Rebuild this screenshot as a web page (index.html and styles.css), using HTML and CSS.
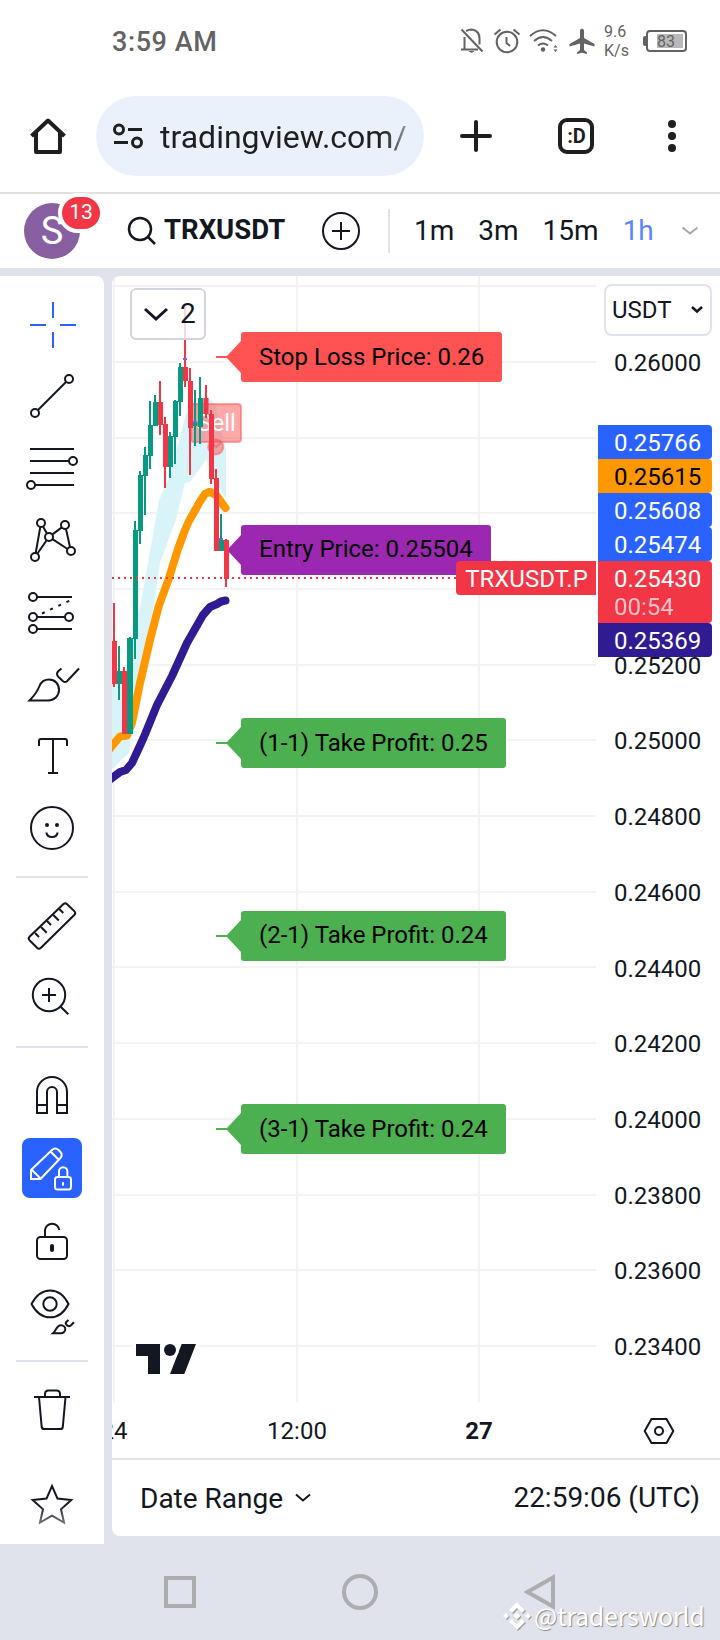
FILE: index.html
```html
<!DOCTYPE html>
<html lang="en">
<head>
  <meta charset="UTF-8" />
  <meta name="viewport" content="width=device-width, initial-scale=1.0" />
  <title>TRXUSDT chart</title>
  <link rel="stylesheet" href="styles.css">
</head>
<body>
  <div class="status-bar">
    <span class="time">3:59 AM</span>
    <svg class="status-icons" width="144" height="32" viewBox="456 24 144 32">
      <!-- muted bell -->
      <path d="M466 30q3-1.500 5.500-1.500 8 1 8 9v6M464.500 36v12.500M461 48.500h17M461.500 28.500l21 22" />
      <path class="solid" d="M468.500 50h6q-3 3.500-6 0z" />
      <!-- alarm -->
      <circle cx="507" cy="41" r="10.300" />
      <path d="M506.500 36v6l3.500 3M494.500 33.500l6-5M519.500 33.500l-6-5" />
      <!-- wifi -->
      <path d="M530 35q13-11.500 26 0M534 40q9-8 18 0M538 44.500q5-4 10 0" />
      <circle class="solid" cx="543" cy="48.500" r="2.200" />
      <path class="solid" d="M553.500 46.500l2-2.500 2 2.500zM553.500 48.500h4l-2 2.500z" />
      <!-- airplane -->
      <path class="solid" d="M580 29q2-3 4 0v8l10.500 6v2.500L584 42.500V49l3 2.500V53l-5-1.200-5 1.200v-1.500l3-2.500v-6.500L569.500 45.500V43L580 37z" />
    </svg>
    <span class="speed">9.6<br>K/s</span>
    <span class="battery"><span>83</span></span>
  </div>

  <div class="browser-bar">
    <svg class="home" width="40" height="40" viewBox="28 116 40 40">
      <path d="M31.500 136L48 120.500 64.500 136M36 133v19h24v-19" />
    </svg>
    <div class="url">
      <svg width="32" height="28" viewBox="112 122 32 28">
        <circle cx="119" cy="129.500" r="4.500" />
        <circle cx="137" cy="142.500" r="4.500" />
        <path d="M128 129.500h14M114 142.500h14" />
      </svg>
      <span>tradingview.com/c</span>
    </div>
    <svg class="browser-actions" width="232" height="40" viewBox="456 116 232 40">
      <path d="M462 136h28M476 122v28" />
      <rect x="560" y="120" width="32" height="32" rx="7" />
      <text x="576.500" y="142.500">:D</text>
      <circle cx="672" cy="124" r="4" />
      <circle cx="672" cy="136" r="4" />
      <circle cx="672" cy="148" r="4" />
    </svg>
  </div>

  <div class="tv-header">
    <div class="avatar">S<span class="badge">13</span></div>
    <svg class="search" width="32" height="32" viewBox="126 214 32 32">
      <circle cx="140" cy="228" r="11" />
      <path d="M147.500 235.500l7.500 7.500" />
    </svg>
    <span class="symbol">TRXUSDT</span>
    <svg class="compare" width="40" height="40" viewBox="321 211 40 40">
      <circle cx="341" cy="231" r="18" />
      <path d="M332 231h18M341 222v18" />
    </svg>
    <div class="intervals">
      <span>1m</span>
      <span>3m</span>
      <span>15m</span>
      <span class="active">1h</span>
    </div>
    <svg class="more" width="20" height="12" viewBox="0 0 20 12"><path d="M2.500 2.500L10 8.500l7.500-6" /></svg>
  </div>

  <div class="main">
    <div class="tools">
      <div class="tool cross">
        <svg viewBox="0 0 60 60"><path d="M31 8v16M31 38v16M8 31h16M38 31h16" /></svg>
      </div>
      <div class="tool">
        <svg viewBox="0 0 60 60"><path d="M16 44l28-28" /><circle cx="13" cy="47" r="4" /><circle cx="47" cy="13" r="4" /></svg>
      </div>
      <div class="tool">
        <svg viewBox="0 0 60 60"><path d="M8 11h44M8 23h39M8 35h44M13 47h39" /><circle cx="51" cy="23" r="4" /><circle cx="9" cy="47" r="4" /></svg>
      </div>
      <div class="tool">
        <svg viewBox="0 0 60 60">
          <path d="M13.700 43l4.600-26M21 16.500l4 7M30.200 24.600l9.600-7.200M44 19l4 18M45.500 39L30.500 29.200M24.700 30.300L15.300 43.700" />
          <circle cx="19" cy="13" r="4" /><circle cx="43" cy="15" r="4" /><circle cx="27" cy="27" r="4" />
          <circle cx="49" cy="41" r="4" /><circle cx="13" cy="47" r="4" />
        </svg>
      </div>
      <div class="tool">
        <svg viewBox="0 0 60 60">
          <path d="M15 15h35M15 35h28M15 47h35" />
          <path d="M20 31.500L48 18.500" stroke-dasharray="3 6" />
          <circle cx="11" cy="15" r="4" /><circle cx="11" cy="35" r="4" /><circle cx="47" cy="35" r="4" /><circle cx="11" cy="47" r="4" />
        </svg>
      </div>
      <div class="tool">
        <svg viewBox="0 0 60 60">
          <path d="M7.500 46.500C13 41 15.500 37 17.500 32c2-5 5-6.500 9.500-6.500 6 0 10 4.500 10 10.500S32 46.500 26 46.500z" />
          <path d="M39.500 14.500L36.500 17q-3 3 0 6l4.500 4.300q2 1.500 4 0L57 14.500" />
        </svg>
      </div>
      <div class="tool">
        <svg viewBox="0 0 60 60"><path d="M17 20v-5q0-2 2-2h24q2 0 2 2v5M31 13v34M26 47h10" /></svg>
      </div>
      <div class="tool">
        <svg viewBox="0 0 60 60">
          <circle cx="30" cy="30" r="21" />
          <circle class="dot" cx="25" cy="27" r="2" /><circle class="dot" cx="35" cy="27" r="2" />
          <path d="M24.300 34.500c1 6 10.400 6 11.400 0" />
        </svg>
      </div>
      <hr>
      <div class="tool">
        <svg viewBox="0 0 60 60">
          <path d="M41.500 8q1.700-1.600 3.400 0l7.600 7.400q1.600 1.700 0 3.400L18.700 52q-1.700 1.600-3.400 0L7.500 44.200q-1.600-1.700 0-3.400z" />
          <path d="M13 37l4 4M19 31l5.700 5.700M25 25l4 4M31.300 19l5.500 5.500M37.300 13l4 4" />
        </svg>
      </div>
      <div class="tool">
        <svg viewBox="0 0 60 60"><circle cx="27" cy="27" r="16.200" /><path d="M20 27h14M27 20v14M38.700 38.700l7.600 7.600" /></svg>
      </div>
      <hr>
      <div class="tool">
        <svg viewBox="0 0 60 60"><path d="M15 47V26a15 15 0 0 1 30 0v21H35V26a5 5 0 0 0-10 0v21zM15 39h10M35 39h10" /></svg>
      </div>
      <div class="tool selected">
        <svg viewBox="0 0 60 60">
          <path d="M9 41v-9L30 12q3-3 6.500 0l1.500 1.500q3.500 3.500 0 7L18.500 41zM9.500 31.500l9 9M28.500 13.500l8.500 8.500" />
          <path d="M37 39v-5.500a4.200 4.200 0 0 1 8.400 0V39M41 44.300v3.400" />
          <rect x="33" y="39" width="16" height="12.500" rx="2.500" />
        </svg>
      </div>
      <div class="tool">
        <svg viewBox="0 0 60 60">
          <rect x="15" y="27" width="30" height="22" rx="3.500" />
          <path d="M23 27v-7a7.200 7.200 0 0 1 14.300 0" />
          <rect class="dot" x="28" y="34" width="4" height="8" rx="2" />
        </svg>
      </div>
      <div class="tool">
        <svg viewBox="0 0 60 60">
          <path d="M9.500 22C19 4 37.500 4 46.500 22 37.500 39.800 19 39.800 9.500 22z" />
          <circle cx="28" cy="22" r="6.700" />
          <path d="M31 51.300c3-2.500 3.500-8 8-8 2.500 0 4.300 2 4.300 4s-2 4-4.300 4zM46.500 38l-2 1.700q-1.500 1.500 0 3l1 1q1.500 1 3 0l3.500-3.500" />
        </svg>
      </div>
      <hr>
      <div class="tool">
        <svg viewBox="0 0 60 60"><path d="M12 17h36M23 17v-3q0-3.500 3.500-3.500h8q3.500 0 3.500 3.500v3M17 17l2.700 30q.3 2 2.300 2h16.500q2 0 2.300-2l2.700-30" /></svg>
      </div>
      <div class="tool star">
        <svg viewBox="0 0 60 60">
          <defs>
            <linearGradient id="fade" x1="0" y1="0" x2="0" y2="1">
              <stop offset="0.500" stop-color="#131722" />
              <stop offset="1" stop-color="#6d7078" />
            </linearGradient>
          </defs>
          <path stroke="url(#fade)" d="M30 12l5.500 12.600 13.800 1.400L39 35.300 42 48.500l-12-6.800-12 6.800 3-13.200L10.700 26l13.800-1.400z" />
        </svg>
      </div>
    </div>

    <div class="chart">
      <div class="pane">
        <svg class="plot" width="484" height="1182" viewBox="112 276 484 1182">
          <path class="grid" d="M114 276v1126M297 276v1126M479 276v1126M112 286h484M112 362h484M112 438h484M112 513h484M112 589h484M112 665h484M112 740h484M112 816h484M112 892h484M112 967h484M112 1043h484M112 1119h484M112 1195h484M112 1270h484M112 1346h484" />

          <path class="cloud" d="M112 683L125 672 133 640 139 613 152 540 159 500 169 478 175 457 185 417 192 403 200 398H209L215 404 223 437 226 450V500L217 483 206 460 190 482 185 483 175 523 172 530 160 563 155 597 142 673 133 717 129 753 112 769z" />

          <rect class="sell" x="191" y="404" width="50" height="38" rx="3" />
          <circle class="sell" cx="215.700" cy="447" r="7.500" />
          <path class="sell-mark" d="M211 443l5 4 5-4" />
          <text class="sell-text" x="216.500" y="430.500">Sell</text>

          <path class="ma orange" d="M108 751L112 746 120 736.500 127 735.500 132 723 140 683 150 640 158.500 607 169 578 178 549 185 530 189 521 200 501.500 205 494 210 491.700 217 496 225.500 508" />
          <path class="ma indigo" d="M108 781L112 778 120 772 126 770 132 763 143.500 738 157 705 172 676 187 643 203 615 210 607 217 604 221 601.500 225.500 600.500" />

          <g class="callout entry">
            <path class="fill" d="M227 550l14-15v-7q0-3 3-3h244q3 0 3 3v44q0 3-3 3H244q-3 0-3-3v-7z" />
            <text x="259" y="557">Entry Price: 0.25504</text>
          </g>

          <!-- wicks, then bodies -->
          <path class="wick up" d="M119 646V700M130 637V640M135 521V659M140 471V544M145 447V515M150 401V469M155 395V425M170 432V478M175 400V464M180 363V416M195 390V446M200 377V444M221 514V545" />
          <path class="wick down" d="M114 603V687M124 667V675M160 381V435M165 417V488M185 304V387M190 368V475M206 385V418M211 410V484M216 469V480M226 539V587" />
          <path class="body up" d="M119.500 671V684M135.500 530V639M140.500 475V531M145.500 455V476M150.500 425V456M155.500 402V426M170.500 436V467M175.500 401V437M180.500 367V402M195 422V426M200.500 398V427M221.500 540V551" />
          <path class="body up wide" d="M130 638V734" />
          <path class="body down" d="M114.500 641V684M124.500 671V734M160.500 402V425M165.500 424V467M185.500 367V381M190.500 381V428M206 398V414M211.500 414V479M216.500 478V551M226.500 540V579" />
          <path class="dots" d="M183 359h4M193 422h4M219 539h4" />

          <path class="last-price" d="M112 578h344" />

          <g class="callout stop">
            <path d="M216 357h12" /><path class="fill" d="M226 357l15-16v-6q0-3 3-3h255q3 0 3 3v44q0 3-3 3H244q-3 0-3-3v-6z" />
            <text x="259" y="365">Stop Loss Price: 0.26</text>
          </g>
          <g class="callout profit">
            <path d="M216 743h12" /><path class="fill" d="M226 743l15-16v-6q0-3 3-3h259q3 0 3 3v44q0 3-3 3H244q-3 0-3-3v-6z" />
            <text x="259" y="751">(1-1) Take Profit: 0.25</text>
          </g>
          <g class="callout profit">
            <path d="M216 936h12" /><path class="fill" d="M226 936l15-16v-6q0-3 3-3h259q3 0 3 3v44q0 3-3 3H244q-3 0-3-3v-6z" />
            <text x="259" y="943">(2-1) Take Profit: 0.24</text>
          </g>
          <g class="callout profit">
            <path d="M216 1129h12" /><path class="fill" d="M226 1129l15-16v-6q0-3 3-3h259q3 0 3 3v44q0 3-3 3H244q-3 0-3-3v-6z" />
            <text x="259" y="1137">(3-1) Take Profit: 0.24</text>
          </g>

          <path class="tag" d="M596 561v34H460q-4 0-4-4v-26q0-4 4-4z" />
          <text class="tag-text" x="526.500" y="586.500">TRXUSDT.P</text>

          <g class="logo">
            <path d="M136 1344h24v30h-12v-18h-12zM181.700 1344H196l-11.700 30H170z" />
            <circle cx="170" cy="1350" r="6" />
          </g>

          <text class="tick" x="114" y="1439">24</text>
          <text class="tick" x="297" y="1439">12:00</text>
          <text class="tick strong" x="479" y="1439">27</text>
        </svg>

        <div class="legend">
          <svg width="26" height="16" viewBox="0 0 26 16"><path d="M2 3l11 10L24 3" /></svg>
          <span>2</span>
        </div>

        <div class="price-axis">
          <div class="currency">
            USDT
            <svg width="14" height="10" viewBox="0 0 14 10"><path d="M2 2l5 4.500L12 2" /></svg>
          </div>
          <div class="prices">
            <span>0.26000</span>
            <span></span>
            <span></span>
            <span></span>
            <span>0.25200</span>
            <span>0.25000</span>
            <span>0.24800</span>
            <span>0.24600</span>
            <span>0.24400</span>
            <span>0.24200</span>
            <span>0.24000</span>
            <span>0.23800</span>
            <span>0.23600</span>
            <span>0.23400</span>
          </div>
          <svg class="settings" width="32" height="30" viewBox="643 1416 32 30">
            <path d="M651.500 1419h15l6.800 12-6.800 12h-15l-6.800-12z" />
            <circle cx="659" cy="1431" r="4" />
          </svg>
          <div class="price-tags">
            <span class="blue">0.25766</span>
            <span class="amber">0.25615</span>
            <span class="blue">0.25608</span>
            <span class="blue">0.25474</span>
            <span class="red">0.25430<small>00:54</small></span>
            <span class="indigo">0.25369</span>
          </div>
        </div>
      </div>

      <div class="footer">
        <span class="range">Date Range</span>
        <svg width="18" height="12" viewBox="0 0 18 12"><path d="M2 2.500l7 6 7-6" /></svg>
        <span class="clock">22:59:06 (UTC)</span>
      </div>
    </div>
  </div>

  <div class="nav-bar">
    <svg width="400" height="40" viewBox="160 1572 400 40">
      <rect x="166" y="1578" width="28" height="28" />
      <circle cx="360" cy="1592" r="16" />
      <path d="M553 1577.500v29L527.500 1592z" />
    </svg>
    <div class="watermark">
      <svg width="30" height="30" viewBox="0 0 30 30">
        <path d="M15 1l8 8-3 3-5-5-5 5-3-3zM15 29l8-8-3-3-5 5-5-5-3 3zM15 11.500l3.500 3.500-3.500 3.500-3.500-3.500zM4 12l3 3-3 3-3-3zM26 12l3 3-3 3-3-3z" />
      </svg>
      <span>@tradersworld</span>
    </div>
  </div>
</body>
</html>
```
FILE: styles.css
```css
:root {
  --text: #131722;
  --line: #e0e3eb;
  --blue: #2962ff;
  --red: #f23645;
  --green: #089981;
  --grey: #636363;
}

* {
  box-sizing: border-box;
}

body {
  margin: 0;
  width: 720px;
  height: 1640px;
  overflow: hidden;
  background: var(--line);
  color: var(--text);
  font-family: Roboto, "Liberation Sans", sans-serif;
}

svg {
  display: block;
  flex: none;
  fill: none;
  stroke: var(--text);
  stroke-width: 2;
}

svg text {
  stroke: none;
}

/* phone status bar */
.status-bar {
  display: flex;
  align-items: center;
  height: 84px;
  padding: 0 33px 2px 112px;
  background: #fff;
  color: var(--grey);
}

.time {
  width: 344px;
  padding-top: 2px;
  font-size: 27px;
  font-weight: 500;
  letter-spacing: 0.6px;
}

.status-icons {
  stroke: var(--grey);
}

.status-icons .solid {
  fill: var(--grey);
  stroke: none;
}

.speed {
  margin-left: 4px;
  width: 39px;
  font-size: 16px;
  line-height: 19px;
}

.battery {
  position: relative;
  display: flex;
  width: 41px;
  height: 22px;
  margin-left: 3px;
  padding: 2px;
  border: 2px solid var(--grey);
  border-radius: 4px;
}

.battery::before {
  content: "";
  position: absolute;
  left: -5px;
  top: 4px;
  width: 3px;
  height: 10px;
  background: var(--grey);
  border-radius: 2px 0 0 2px;
}

.battery span {
  width: 28px;
  margin-left: 7px;
  background: #b9b9b9;
  font-size: 16px;
  line-height: 15px;
}

/* browser bar */
.browser-bar {
  display: flex;
  align-items: center;
  height: 110px;
  padding: 0 28px 4px;
  background: #fff;
  border-bottom: 2px solid #e0e0e0;
}

.home {
  stroke: #1f1f1f;
  stroke-width: 4;
  stroke-linejoin: round;
}

.url {
  display: flex;
  align-items: center;
  width: 328px;
  height: 80px;
  margin: 0 32px 0 28px;
  padding: 0 14px 0 16px;
  background: #ebf1fa;
  border-radius: 40px;
}

.url svg {
  stroke: #1f1f1f;
  stroke-width: 3;
}

.url span {
  width: 248px;
  margin-left: 16px;
  padding-top: 2px;
  overflow: hidden;
  white-space: nowrap;
  color: #1f1f1f;
  font-size: 32px;
  -webkit-mask-image: linear-gradient(to right, #000 90%, rgba(0, 0, 0, 0.4));
  mask-image: linear-gradient(to right, #000 90%, rgba(0, 0, 0, 0.4));
}

.browser-actions {
  stroke: #1f1f1f;
  stroke-width: 4;
  stroke-linecap: round;
}

.browser-actions circle {
  fill: #1f1f1f;
  stroke: none;
}

.browser-actions text {
  fill: #1f1f1f;
  font-size: 20px;
  font-weight: 700;
  text-anchor: middle;
}

/* chart header */
.tv-header {
  display: flex;
  align-items: center;
  height: 74px;
  padding-left: 24px;
  background: #fff;
}

.avatar {
  position: relative;
  width: 56px;
  height: 56px;
  background: #8860a1;
  border-radius: 50%;
  color: #fff;
  font-size: 38px;
  line-height: 56px;
  text-align: center;
}

.badge {
  position: absolute;
  left: 34px;
  top: -10px;
  width: 46px;
  height: 40px;
  border: 4px solid #fff;
  border-radius: 20px;
  background: var(--red);
  font-size: 21px;
  line-height: 31px;
}

.search {
  margin-left: 46px;
  stroke-width: 2.500;
}

.symbol {
  width: 157px;
  margin-left: 6px;
  padding-bottom: 4px;
  font-size: 27.500px;
  font-weight: 700;
}

.intervals {
  display: flex;
  gap: 24px;
  align-items: center;
  width: 292px;
  height: 44px;
  margin-left: 27px;
  padding: 0 0 2px 24px;
  border-left: 2px solid var(--line);
  font-size: 28px;
}

.intervals .active {
  color: #5a85ff;
}

.more {
  stroke: #a6a8ad;
}

/* drawing tools */
.main {
  display: flex;
  align-items: flex-start;
  gap: 8px;
  padding-top: 8px;
}

.tools {
  width: 104px;
  height: 1268px;
  padding: 12px 16px 0;
  background: #fff;
  border-radius: 0 8px 0 0;
}

.tool {
  display: flex;
  align-items: center;
  justify-content: center;
  height: 72px;
}

.tool svg {
  width: 60px;
  height: 60px;
}

.tool .dot {
  fill: var(--text);
  stroke: none;
}

.cross svg {
  stroke: var(--blue);
}

.selected svg {
  background: var(--blue);
  border-radius: 8px;
  stroke: #fff;
}

.star {
  margin-top: 22px;
}

.tools hr {
  height: 2px;
  margin: 12px 0;
  border: 0;
  background: var(--line);
}

/* chart */
.chart {
  width: 608px;
  height: 1260px;
  overflow: hidden;
  background: #fff;
  border-radius: 8px 0 0 8px;
}

.pane {
  position: relative;
  display: flex;
  height: 1184px;
  border-bottom: 2px solid var(--line);
}

.plot text {
  font-size: 24px;
}

.grid {
  stroke: #2a2e39;
  stroke-opacity: 0.06;
}

.cloud {
  fill: #d9f4f9;
  stroke: none;
}

.sell {
  fill: rgba(255, 82, 82, 0.5);
  stroke: rgba(255, 82, 82, 0.5);
}

.sell-mark {
  stroke: rgba(242, 54, 69, 0.4);
}

.plot .sell-text {
  fill: #fff;
  text-anchor: middle;
}

.ma {
  stroke-width: 8;
  stroke-linecap: round;
  stroke-linejoin: round;
}

.ma.orange {
  stroke: #ff9800;
}

.ma.indigo {
  stroke: #311b92;
}

.body {
  stroke-width: 5;
}

.body.wide {
  stroke-width: 6;
}

.up {
  stroke: var(--green);
}

.down {
  stroke: var(--red);
}

.dots {
  stroke: #6a6cf0;
}

.last-price {
  stroke: var(--red);
  stroke-dasharray: 2 4;
}

.callout .fill {
  stroke: none;
}

.callout text {
  fill: #000;
}

.stop {
  fill: #ff5252;
  stroke: #ff5252;
}

.entry {
  fill: #9c27b0;
}

.profit {
  fill: #4caf50;
  stroke: #4caf50;
}

.tag {
  fill: var(--red);
  stroke: none;
}

.plot .tag-text {
  fill: #fff;
  text-anchor: middle;
}

.logo {
  fill: var(--text);
  stroke: #fff;
  stroke-width: 6;
  paint-order: stroke;
}

.tick {
  fill: var(--text);
  text-anchor: middle;
}

.strong {
  font-weight: 700;
}

.legend {
  position: absolute;
  left: 18px;
  top: 12px;
  display: flex;
  align-items: center;
  gap: 11px;
  width: 76px;
  height: 52px;
  padding: 0 0 2px 11px;
  background: rgba(255, 255, 255, 0.8);
  border: 2px solid #d1d4dc;
  border-radius: 6px;
  font-size: 28px;
}

.legend svg {
  margin-top: 2px;
  stroke-width: 3;
}

/* price axis */
.price-axis {
  position: relative;
  width: 124px;
  padding: 8px 8px 0;
}

.currency {
  display: flex;
  align-items: center;
  justify-content: space-between;
  width: 108px;
  height: 52px;
  padding: 0 6px;
  border: 2px solid var(--line);
  border-radius: 8px;
  font-size: 24px;
}

.currency svg {
  stroke-width: 2.500;
}

.prices {
  display: flex;
  flex-direction: column;
  margin-top: -10px;
  padding-left: 10px;
  font-size: 24px;
}

.prices span {
  height: 75.690px;
  line-height: 75.690px;
}

.settings {
  margin: 30px 0 0 39px;
}

.price-tags {
  position: absolute;
  left: 2px;
  top: 149px;
  width: 114px;
  color: #fff;
  font-size: 24px;
}

.price-tags span {
  display: block;
  height: 34px;
  padding-left: 16px;
  line-height: 36px;
  border-radius: 0 4px 4px 0;
}

.price-tags .red {
  height: 62px;
}

.price-tags small {
  display: block;
  font-size: 24px;
  line-height: 20px;
  opacity: 0.7;
}

.blue {
  background: var(--blue);
}

.price-tags .amber {
  background: #ff9800;
  color: #000;
}

.red {
  background: var(--red);
}

.price-tags .indigo {
  background: #311b92;
}

.footer {
  display: flex;
  align-items: center;
  height: 76px;
  padding: 0 20px 0 28px;
  font-size: 28px;
}

.footer svg {
  margin-left: 11px;
}

.clock {
  margin-left: auto;
  padding-bottom: 2px;
}

/* phone navigation */
.nav-bar {
  position: relative;
  padding: 28px 160px;
}

.nav-bar > svg {
  stroke: #adadad;
  stroke-width: 4;
}

.watermark {
  position: absolute;
  left: 502px;
  top: 54px;
  display: flex;
  align-items: center;
  gap: 2px;
  color: #fff;
  font-family: "Noto Sans CJK SC", "Noto Sans", sans-serif;
  font-size: 24.500px;
  line-height: 36px;
  text-shadow: 1px 1px 1px #888;
}

.watermark svg {
  fill: #fff;
  stroke: none;
  filter: drop-shadow(1px 1px 0.5px #999);
}
```
